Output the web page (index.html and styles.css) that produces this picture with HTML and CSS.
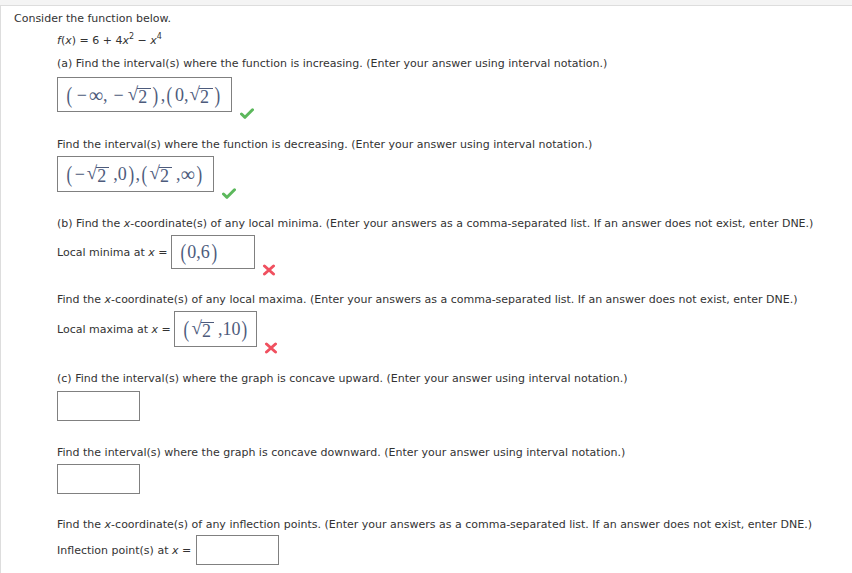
FILE: index.html
```html
<!DOCTYPE html>
<html>
<head>
<meta charset="utf-8">
<link rel="stylesheet" href="styles.css">
</head>
<body>
<div class="topbar"></div>
<div class="page">
  <p class="intro">Consider the function below.</p>
  <div class="indent">
    <p class="fx"><i>f</i>(<i>x</i>) = 6 + 4<i>x</i><sup>2</sup> − <i>x</i><sup>4</sup></p>
    <p class="q qa">(a) Find the interval(s) where the function is increasing. (Enter your answer using interval notation.)</p>
    <div class="row r1">
      <div class="box box1"><span class="math"><span class="bp">(</span><span class="op">−</span><span class="inf">∞</span>,<span class="op sp">−</span><span class="sqrt"><span class="rad">√</span><span class="ov">2</span></span><span class="bp">)</span>,<span class="bp">(</span>0,<span class="sqrt"><span class="rad">√</span><span class="ov">2</span></span><span class="bp">)</span></span></div>
      <svg class="ok" width="14" height="11" viewBox="0 0 14 11"><path d="M1.5 6 L5 9.3 L12.5 1.8" fill="none" stroke="#5cb85c" stroke-width="3" stroke-linecap="round" stroke-linejoin="round"/></svg>
    </div>
    <p class="q qd">Find the interval(s) where the function is decreasing. (Enter your answer using interval notation.)</p>
    <div class="row r2">
      <div class="box box2"><span class="math"><span class="bp">(</span><span class="op">−</span><span class="sqrt"><span class="rad">√</span><span class="ov">2</span></span><span class="cm">,</span>0<span class="bp">)</span>,<span class="bp">(</span><span class="sqrt"><span class="rad">√</span><span class="ov">2</span></span><span class="cm">,</span><span class="inf">∞</span><span class="bp">)</span></span></div>
      <svg class="ok" width="14" height="11" viewBox="0 0 14 11"><path d="M1.5 6 L5 9.3 L12.5 1.8" fill="none" stroke="#5cb85c" stroke-width="3" stroke-linecap="round" stroke-linejoin="round"/></svg>
    </div>
    <p class="q qb">(b) Find the <i>x</i>-coordinate(s) of any local minima. (Enter your answers as a comma-separated list. If an answer does not exist, enter DNE.)</p>
    <div class="row r3">
      <span class="label">Local minima at <i>x</i> =</span>
      <div class="box box3"><span class="math"><span class="bp">(</span>0,6<span class="bp">)</span></span></div>
      <svg class="bad" width="14" height="12" viewBox="0 0 14 12"><path d="M2.5 2 L11.5 10 M11.5 2 L2.5 10" fill="none" stroke="#f0505f" stroke-width="3" stroke-linecap="round"/></svg>
    </div>
    <p class="q qm">Find the <i>x</i>-coordinate(s) of any local maxima. (Enter your answers as a comma-separated list. If an answer does not exist, enter DNE.)</p>
    <div class="row r4">
      <span class="label">Local maxima at <i>x</i> =</span>
      <div class="box box4"><span class="math"><span class="bp">(</span><span class="sqrt"><span class="rad">√</span><span class="ov">2</span></span><span class="cm">,</span>10<span class="bp">)</span></span></div>
      <svg class="bad" width="14" height="12" viewBox="0 0 14 12"><path d="M2.5 2 L11.5 10 M11.5 2 L2.5 10" fill="none" stroke="#f0505f" stroke-width="3" stroke-linecap="round"/></svg>
    </div>
    <p class="q qc">(c) Find the interval(s) where the graph is concave upward. (Enter your answer using interval notation.)</p>
    <div class="row r5"><div class="box empty"></div></div>
    <p class="q qcd">Find the interval(s) where the graph is concave downward. (Enter your answer using interval notation.)</p>
    <div class="row r6"><div class="box empty"></div></div>
    <p class="q qi">Find the <i>x</i>-coordinate(s) of any inflection points. (Enter your answers as a comma-separated list. If an answer does not exist, enter DNE.)</p>
    <div class="row r7">
      <span class="label wide">Inflection point(s) at <i>x</i> =</span>
      <div class="box empty"></div>
    </div>
  </div>
</div>
</body>
</html>
```
FILE: styles.css
```css
html, body {
  margin: 0;
  padding: 0;
  background: #ffffff;
}
body {
  font-family: "DejaVu Sans", Verdana, sans-serif;
  font-size: 11px;
  color: #333333;
  width: 852px;
  height: 573px;
  overflow: hidden;
}
.topbar {
  height: 5px;
  background: #f4f4f4;
  border-bottom: 1px solid #dddddd;
}
.page {
  box-sizing: border-box;
  border-left: 1px solid #dddddd;
  padding: 6px 0 0 13px;
  height: 567px;
}
p {
  margin: 0;
  line-height: 14px;
}
.intro {
  margin: 0;
}
.indent {
  padding-left: 43px;
}
.fx {
  margin-top: 8px;
}
.fx sup {
  font-size: 8px;
  line-height: 0;
  vertical-align: 5px;
}
.q {
  margin-top: 9px;
}
.row {
  display: flex;
  align-items: flex-end;
}
.box {
  box-sizing: border-box;
  border: 1px solid #808080;
  background: #ffffff;
  display: flex;
  align-items: center;
  padding-left: 7px;
}
.math {
  font-family: "Liberation Serif", "Times New Roman", serif;
  font-size: 18px;
  color: #4d5b7c;
  white-space: nowrap;
  display: inline-flex;
  align-items: center;
  line-height: 20px;
}
.bp {
  font-size: 20px;
  display: inline-block;
  transform: scale(0.85, 1.2);
  line-height: 1;
  margin: 0 1px;
}
.op {
  margin: 0 1px 0 1px;
}
.op.sp {
  margin-left: 5px;
  margin-right: 2px;
}
.inf {
  font-size: 20px;
}
.cm {
  margin-left: 4px;
}
.sqrt {
  display: inline-flex;
  align-items: flex-end;
  margin-left: 1px;
}
.rad {
  font-size: 19px;
  line-height: 20px;
  position: relative;
  top: -1px;
}
.ov {
  border-top: 1px solid #4d5b7c;
  line-height: 16px;
  padding: 0 3px 0 1px;
  margin-left: -1px;
}
.box1 .bp { margin: 0 2px 0 1px; }
.box1 .op { margin: 0 2px; }
.box1 .op.sp { margin-left: 6px; margin-right: 3px; }
.box1 .ov { padding-right: 4px; }
.ok {
  margin-left: 8px;
  margin-bottom: -7px;
  flex: none;
}
.bad {
  margin-left: 7px;
  margin-bottom: -7px;
  flex: none;
}
.r1 { margin-top: 6px; }
.box1 { width: 175px; height: 35px; }
.qd { margin-top: 26px; }
.r2 { margin-top: 4px; }
.box2 { width: 157px; height: 36px; }
.qb { margin-top: 25px; }
.r3 { margin-top: 4px; align-items: center; }
.r3 .bad, .r4 .bad { align-self: flex-end; }
.label { margin-right: 3px; }
.label.wide { margin-right: 5px; }
.box3 { width: 84px; height: 34px; }
.qm { margin-top: 24px; }
.r4 { margin-top: 4px; align-items: center; }
.box4 { width: 83px; height: 36px; }
.qc { margin-top: 25px; }
.r5 { margin-top: 5px; }
.r6 { margin-top: 4px; }
.empty { width: 83px; height: 30px; }
.qcd { margin-top: 25px; }
.qi { margin-top: 24px; }
.r7 { margin-top: 3px; align-items: center; }
```
